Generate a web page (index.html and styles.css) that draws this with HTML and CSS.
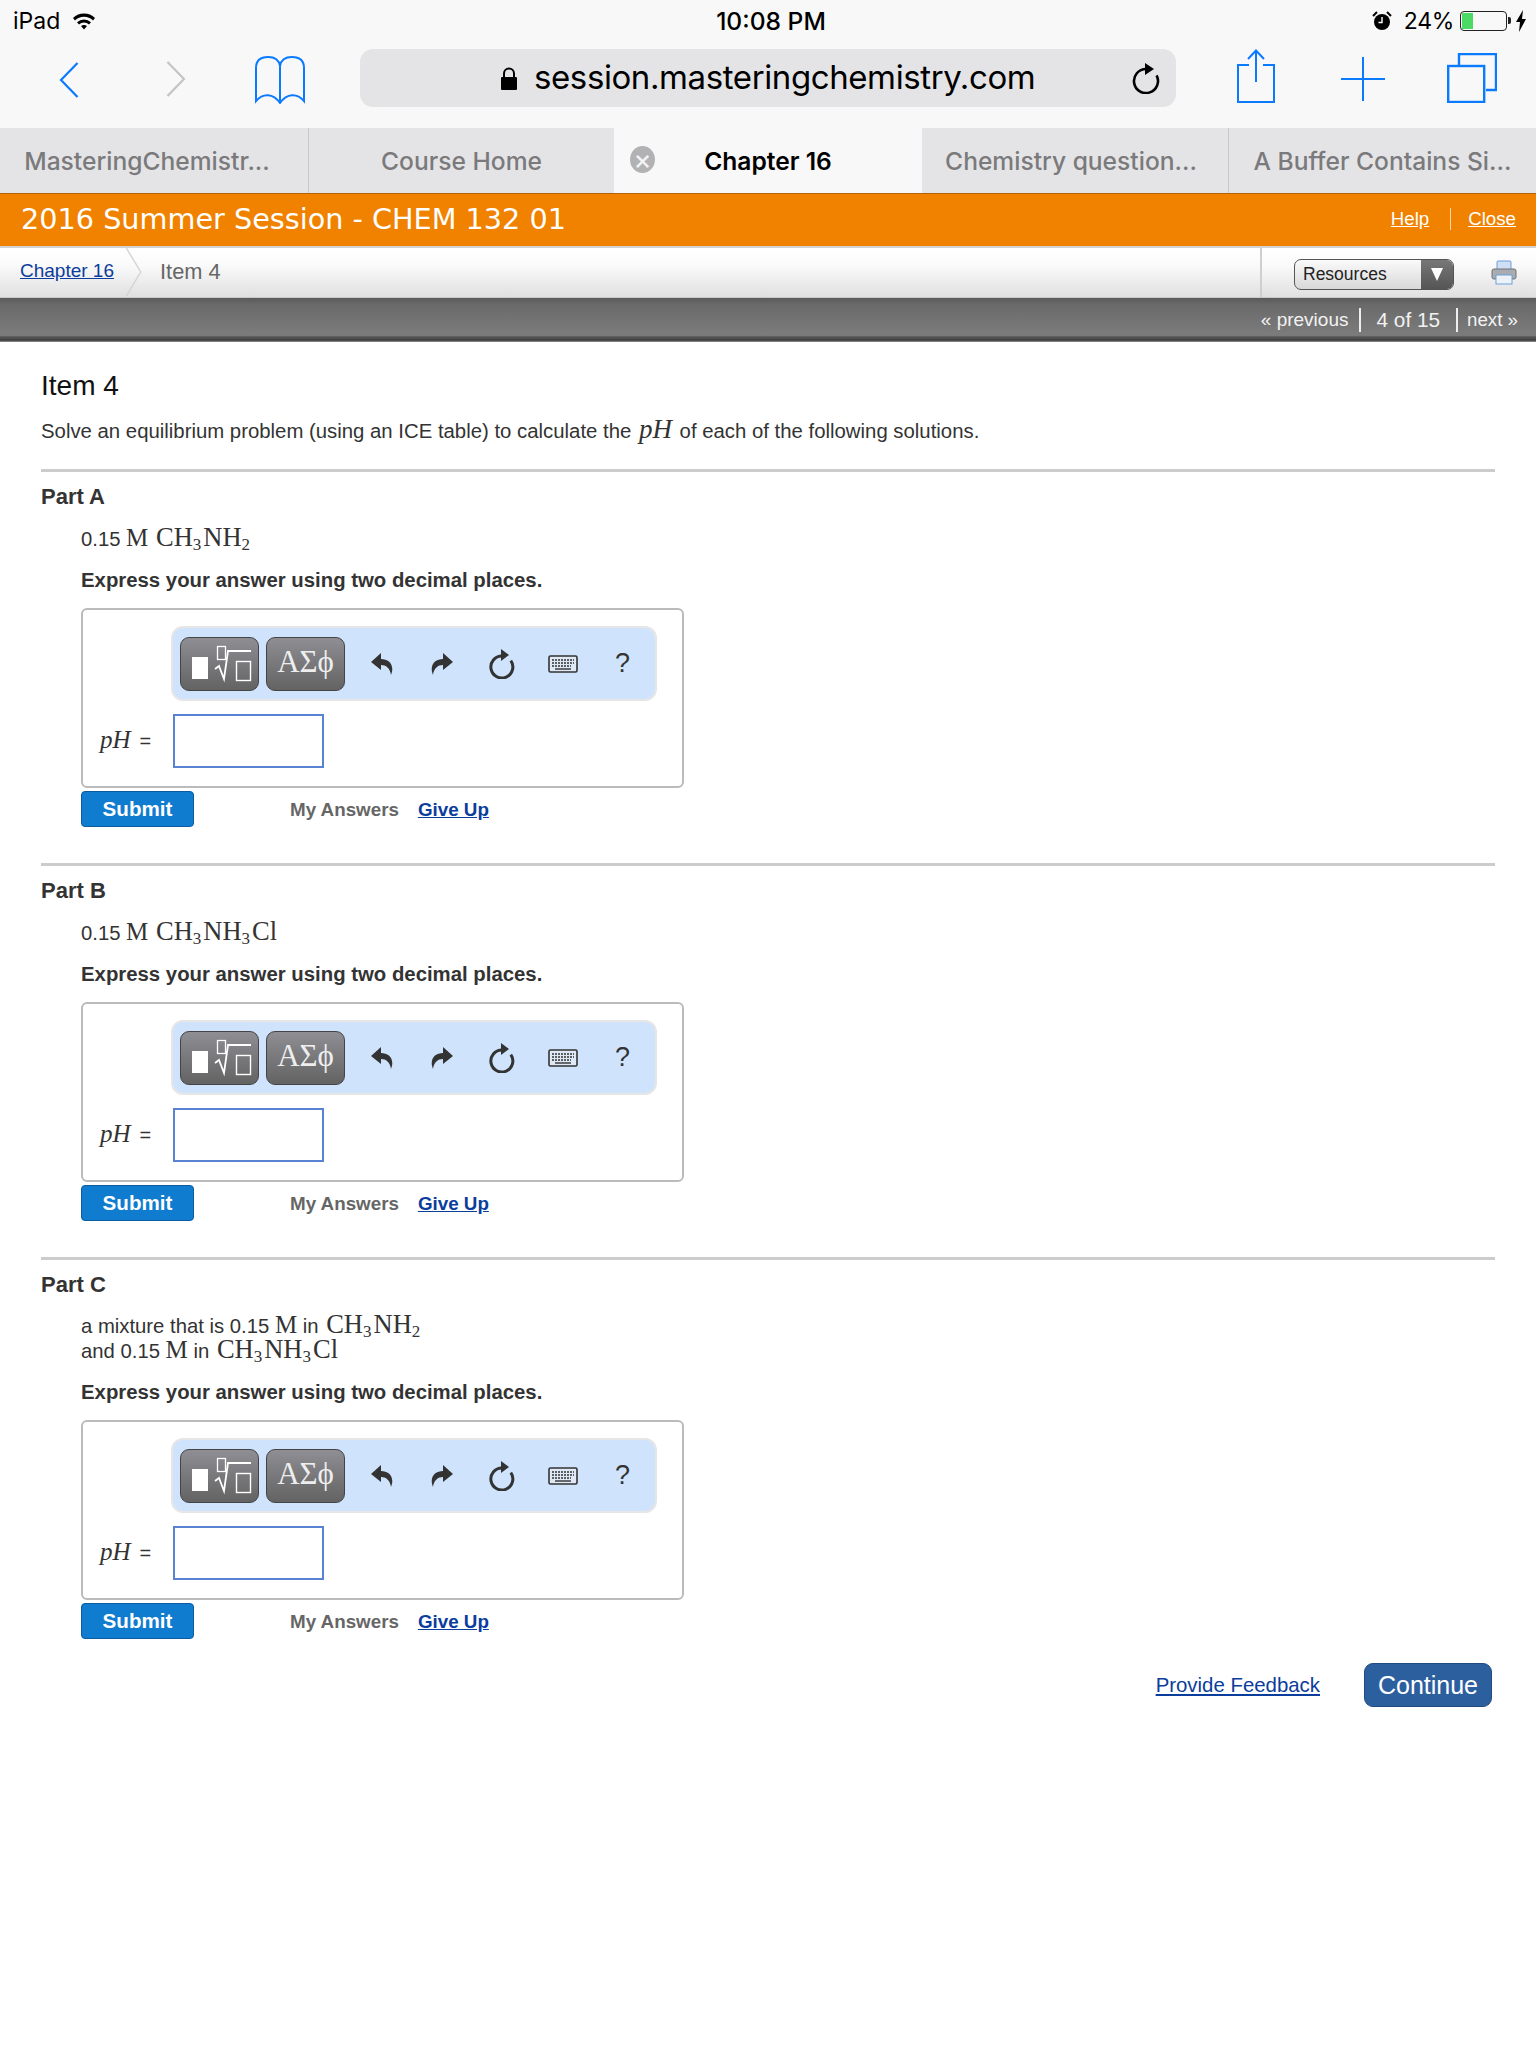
FILE: index.html
```html
<!DOCTYPE html>
<html lang="en">
<head>
<meta charset="utf-8">
<title>Item 4</title>
<link rel="stylesheet" href="styles.css">
</head>
<body>
<svg class="defs" width="0" height="0" aria-hidden="true">
  <symbol id="i-undo" viewBox="0 0 22 24"><path d="M10 1 L0 10 L10 18 V13 C15 13 19 16 20 23 C24 13 18 7 10 7 Z"/></symbol>
  <symbol id="i-redo" viewBox="0 0 22 24"><path d="M12 1 L22 10 L12 18 V13 C7 13 3 16 2 23 C-2 13 4 7 12 7 Z"/></symbol>
  <symbol id="i-reset" viewBox="0 0 28 30"><path d="M14 7 A11 11 0 1 0 22.8 11.6" fill="none" stroke="#333" stroke-width="3"/><path d="M13 0 L21 6 L13 12 Z"/></symbol>
  <symbol id="i-kbd" viewBox="0 0 30 18"><rect x="1" y="1" width="28" height="16" rx="1.5" fill="#dfe9f5" stroke="#333" stroke-width="1.6"/><path d="M4 5h22M4 8h22M4 11h19" stroke="#333" stroke-width="1.5" stroke-dasharray="2 1" fill="none"/><path d="M7 14h16" stroke="#333" stroke-width="1.4"/></symbol>
  <symbol id="i-tpl" viewBox="0 0 78 54"><rect x="12" y="20" width="16" height="22" fill="#fff"/><rect x="37.5" y="9.5" width="8" height="13" fill="none" stroke="#fff" stroke-width="1.3"/><path d="M35 32 L39 29 L44 42 L48 14 H71" fill="none" stroke="#fff" stroke-width="1.8"/><rect x="56.5" y="24.5" width="14" height="19" fill="none" stroke="#fff" stroke-width="1.4"/></symbol>
</svg>

<header class="ios-status">
  <div class="status-left">iPad
    <svg class="wifi" width="24" height="18" viewBox="0 0 24 18"><path d="M1 6 A16 16 0 0 1 23 6 L21 8.4 A13 13 0 0 0 3 8.4 Z M5 10.2 A10.5 10.5 0 0 1 19 10.2 L17 12.4 A7.5 7.5 0 0 0 7 12.4 Z M9 14 A5 5 0 0 1 15 14 L12 17.5 Z" fill="#000"/></svg>
  </div>
  <div class="status-time">10:08 PM</div>
  <div class="status-right">
    <svg width="20" height="20" viewBox="0 0 20 20"><circle cx="10" cy="11" r="8" fill="#000"/><path d="M10 6v5.5H6.5" stroke="#fff" stroke-width="1.4" fill="none"/><path d="M1 5 L5 1 M19 5 L15 1" stroke="#000" stroke-width="2"/></svg>
    <span class="pct">24%</span>
    <span class="battery"><span class="battery-fill"></span></span>
    <svg width="12" height="22" viewBox="0 0 12 22"><path d="M8 0 L1 12 H5 L4 22 L11 9 H7 Z" fill="#000"/></svg>
  </div>
</header>

<div class="safari-bar">
  <div class="nav-icons">
    <svg class="ic-back" width="20" height="36" viewBox="0 0 20 36"><path d="M18.5 1 L2 18 L18.5 35" fill="none" stroke="#0a7aff" stroke-width="2.2"/></svg>
    <svg class="ic-fwd" width="20" height="36" viewBox="0 0 20 36"><path d="M1.5 1 L18 18 L1.5 35" fill="none" stroke="#c4c4c6" stroke-width="2.2"/></svg>
    <svg class="ic-book" width="50" height="48" viewBox="0 0 50 48"><path d="M25 10 C24 4 20 1 13 1 C5 1 1 4 1 12 V45 C8 37 18 37 25 47 C32 37 42 37 49 45 V12 C49 4 45 1 37 1 C30 1 26 4 25 10 Z M25 10 V47" fill="none" stroke="#0a7aff" stroke-width="2"/></svg>
  </div>
  <div class="address">
    <svg class="lock" width="18" height="23" viewBox="0 0 18 23"><rect x="1" y="10" width="16" height="13" rx="1" fill="#000"/><path d="M4 10 V6.5 A5 5 0 0 1 14 6.5 V10" fill="none" stroke="#000" stroke-width="2"/></svg>
    <span class="url">session.masteringchemistry.com</span>
    <svg class="reload" width="28" height="32" viewBox="0 0 28 32"><path d="M14 7 A12 12 0 1 0 24.6 13.4" fill="none" stroke="#000" stroke-width="2.6"/><path d="M13 1 L22 7 L13 13 Z" fill="#000"/></svg>
  </div>
  <div class="action-icons">
    <svg class="ic-share" width="38" height="54" viewBox="0 0 38 54"><path d="M12 16 H1 V53 H37 V16 H26" fill="none" stroke="#0a7aff" stroke-width="2"/><path d="M19 2 V33 M11 10 L19 1.5 L27 10" fill="none" stroke="#0a7aff" stroke-width="2"/></svg>
    <svg class="ic-plus" width="44" height="44" viewBox="0 0 44 44"><path d="M22 0 V44 M0 22 H44" stroke="#0a7aff" stroke-width="2"/></svg>
    <svg class="ic-tabs" width="50" height="50" viewBox="0 0 50 50"><path d="M12 12 V1 H49 V37 H39" fill="none" stroke="#0a7aff" stroke-width="2.4"/><rect x="1.2" y="13" width="36" height="36" fill="none" stroke="#0a7aff" stroke-width="2.4"/></svg>
  </div>
</div>

<nav class="tabs">
  <div class="tab tab-first">MasteringChemistr...</div>
  <div class="tab">Course Home</div>
  <div class="tab tab-active">
    <span class="tab-close">×</span>
    <span>Chapter 16</span>
  </div>
  <div class="tab tab-fourth">Chemistry question...</div>
  <div class="tab tab-last">A Buffer Contains Si...</div>
</nav>

<div class="course-bar">
  <div class="course-title">2016 Summer Session - CHEM 132 01</div>
  <div class="course-links"><a href="#">Help</a><span class="course-sep"></span><a href="#">Close</a></div>
</div>

<div class="crumb-bar">
  <a class="crumb-link" href="#">Chapter 16</a>
  <svg class="crumb-arrow" width="18" height="50" viewBox="0 0 18 50"><path d="M1 0 L16 25 L1 50" fill="none" stroke="#d4d4d4" stroke-width="1.5"/></svg>
  <span class="crumb-current">Item 4</span>
  <div class="crumb-tools">
    <div class="select"><span class="select-label">Resources</span><span class="select-btn"><i class="select-tri"></i></span></div>
    <svg class="printer" width="26" height="25" viewBox="0 0 26 25"><rect x="6" y="1" width="14" height="13" rx="1" fill="#cfe0f5" stroke="#6f9fd8"/><rect x="1" y="9" width="24" height="10" rx="2" fill="#a9acb0" stroke="#6f7378"/><rect x="5" y="15" width="16" height="9" fill="#eef3fa" stroke="#6f9fd8"/></svg>
  </div>
</div>

<div class="pager-bar">
  <span>« previous</span><span class="pager-sep"></span><span class="pager-count">4 of 15</span><span class="pager-sep pager-sep-last"></span><span class="pager-next">next »</span>
</div>

<main class="content">
  <h1 class="item-title">Item 4</h1>
  <p class="intro">Solve an equilibrium problem (using an ICE table) to calculate the <span class="math math-i math-big">pH</span> of each of the following solutions.</p>

  <section class="part part-first">
    <h2 class="part-title">Part A</h2>
    <div class="part-body">
      <p class="formula">0.15 <span class="math">M</span> <span class="math chem">CH<sub>3</sub>NH<sub>2</sub></span></p>
      <p class="instruction">Express your answer using two decimal places.</p>
      <div class="answer-box">
        <div class="math-toolbar">
          <button class="tb-btn"><svg width="78" height="54"><use href="#i-tpl"/></svg></button>
          <button class="tb-btn tb-greek">ΑΣϕ</button>
          <svg class="tb-ic tb-undo" width="22" height="24"><use href="#i-undo"/></svg>
          <svg class="tb-ic tb-redo" width="22" height="24"><use href="#i-redo"/></svg>
          <svg class="tb-ic tb-reset" width="28" height="30"><use href="#i-reset"/></svg>
          <svg class="tb-ic tb-kbd" width="30" height="18"><use href="#i-kbd"/></svg>
          <span class="tb-help">?</span>
        </div>
        <div class="answer-row"><span class="answer-label"><span class="math math-i">pH</span><span class="eq">=</span></span><span class="answer-input"></span></div>
      </div>
      <div class="actions"><button class="submit">Submit</button><span class="my-answers">My Answers</span><a class="give-up" href="#">Give Up</a></div>
    </div>
  </section>

  <section class="part">
    <h2 class="part-title">Part B</h2>
    <div class="part-body">
      <p class="formula">0.15 <span class="math">M</span> <span class="math chem">CH<sub>3</sub>NH<sub>3</sub>Cl</span></p>
      <p class="instruction">Express your answer using two decimal places.</p>
      <div class="answer-box">
        <div class="math-toolbar">
          <button class="tb-btn"><svg width="78" height="54"><use href="#i-tpl"/></svg></button>
          <button class="tb-btn tb-greek">ΑΣϕ</button>
          <svg class="tb-ic tb-undo" width="22" height="24"><use href="#i-undo"/></svg>
          <svg class="tb-ic tb-redo" width="22" height="24"><use href="#i-redo"/></svg>
          <svg class="tb-ic tb-reset" width="28" height="30"><use href="#i-reset"/></svg>
          <svg class="tb-ic tb-kbd" width="30" height="18"><use href="#i-kbd"/></svg>
          <span class="tb-help">?</span>
        </div>
        <div class="answer-row"><span class="answer-label"><span class="math math-i">pH</span><span class="eq">=</span></span><span class="answer-input"></span></div>
      </div>
      <div class="actions"><button class="submit">Submit</button><span class="my-answers">My Answers</span><a class="give-up" href="#">Give Up</a></div>
    </div>
  </section>

  <section class="part part-last">
    <h2 class="part-title">Part C</h2>
    <div class="part-body">
      <p class="formula formula-two">a mixture that is 0.15 <span class="math">M</span> in <span class="math chem">CH<sub>3</sub>NH<sub>2</sub></span><br>and 0.15 <span class="math">M</span> in <span class="math chem">CH<sub>3</sub>NH<sub>3</sub>Cl</span></p>
      <p class="instruction">Express your answer using two decimal places.</p>
      <div class="answer-box">
        <div class="math-toolbar">
          <button class="tb-btn"><svg width="78" height="54"><use href="#i-tpl"/></svg></button>
          <button class="tb-btn tb-greek">ΑΣϕ</button>
          <svg class="tb-ic tb-undo" width="22" height="24"><use href="#i-undo"/></svg>
          <svg class="tb-ic tb-redo" width="22" height="24"><use href="#i-redo"/></svg>
          <svg class="tb-ic tb-reset" width="28" height="30"><use href="#i-reset"/></svg>
          <svg class="tb-ic tb-kbd" width="30" height="18"><use href="#i-kbd"/></svg>
          <span class="tb-help">?</span>
        </div>
        <div class="answer-row"><span class="answer-label"><span class="math math-i">pH</span><span class="eq">=</span></span><span class="answer-input"></span></div>
      </div>
      <div class="actions"><button class="submit">Submit</button><span class="my-answers">My Answers</span><a class="give-up" href="#">Give Up</a></div>
    </div>
  </section>

  <div class="page-footer">
    <a class="feedback" href="#">Provide Feedback</a>
    <button class="continue">Continue</button>
  </div>
</main>
</body>
</html>
```
FILE: styles.css
```css
* { box-sizing: border-box; }
html, body { margin: 0; padding: 0; background: #fff; }
body { font-family: "Liberation Sans", Arial, sans-serif; width: 1536px; height: 2048px; overflow: hidden; color: #333; }
.defs { position: absolute; }
p, h1, h2 { margin: 0; font-weight: normal; }
button { font-family: inherit; padding: 0; }

.ios-status { height: 41px; background: #f8f8f8; display: grid; grid-template-columns: 1fr auto 1fr; align-items: center; padding: 0 9px 0 13px; font-family: Inter, "Liberation Sans", sans-serif; font-size: 23px; color: #000; }
.status-left { display: flex; align-items: center; gap: 12px; }
.status-time { font-weight: 500; font-size: 24.6px; padding-left: 2px; }
.status-right { display: flex; align-items: center; justify-content: flex-end; gap: 6px; }
.pct { margin-left: 6px; letter-spacing: -0.3px; }
.battery { width: 47px; height: 20px; border: 1.5px solid #222; border-radius: 4px; padding: 1px; display: block; position: relative; margin-right: 2px; }
.battery::after { content: ""; position: absolute; right: -4.5px; top: 5px; width: 3px; height: 7px; background: #222; border-radius: 0 2px 2px 0; }
.battery-fill { display: block; width: 11px; height: 100%; background: #4cd964; }

.safari-bar { height: 87px; background: #f8f8f8; display: flex; align-items: flex-start; }
.nav-icons { width: 360px; display: flex; padding-left: 59px; }
.ic-back { margin-top: 21px; }
.ic-fwd { margin-top: 20px; margin-left: 87px; }
.ic-book { margin-top: 15px; margin-left: 69px; }
.address { width: 816px; height: 58px; margin-top: 8px; background: #e4e4e6; border-radius: 13px; display: flex; align-items: center; padding-left: 140px; font-family: Inter, "Liberation Sans", sans-serif; font-size: 33px; letter-spacing: -0.4px; color: #000; }
.lock { margin-right: 16px; }
.url { white-space: nowrap; padding-bottom: 2px; }
.reload { margin-left: auto; margin-right: 16px; }
.action-icons { display: flex; padding-left: 61px; }
.ic-share { margin-top: 8px; }
.ic-plus { margin-top: 16px; margin-left: 66px; }
.ic-tabs { margin-top: 12px; margin-left: 62px; }

.tabs { height: 65px; display: grid; grid-template-columns: 308px 306px 308px 306px 308px; background: #e4e4e6; font-family: Inter, "Liberation Sans", sans-serif; font-size: 24.6px; font-weight: 500; color: #7a7a7c; }
.tab { display: flex; align-items: center; justify-content: center; border-left: 1px solid #c8c8ca; white-space: nowrap; }
.tab-first { border-left: 0; padding-right: 14px; }
.tab-fourth { border-left: 0; padding-right: 8px; }
.tab-active { background: #f8f8f8; color: #000; font-weight: 600; border-left: 0; position: relative; }
.tab-close { position: absolute; left: 16px; top: 18px; width: 25px; height: 27px; border-radius: 50%; background: #b2b2b4; color: #f4f4f4; font-size: 28px; font-weight: 400; line-height: 26px; text-align: center; }

.course-bar { height: 53px; background: #f08200; border-top: 1px solid #b5620c; display: flex; align-items: center; justify-content: space-between; padding: 0 20px 3px 21px; color: #fff; }
.course-title { font-family: "DejaVu Sans", sans-serif; font-size: 28.7px; white-space: nowrap; }
.course-links { display: flex; align-items: center; font-size: 18.7px; }
.course-links a { color: #fff; }
.course-sep { width: 1px; height: 22px; background: #ffd9a8; margin: 0 17px 0 21px; }

.crumb-bar { height: 52px; border-top: 2px solid #d2d2d2; background: linear-gradient(#fff, #fafafa 35%, #e0e0e0); display: flex; align-items: center; padding-left: 20px; border-bottom: 1px solid #c9c9c9; font-size: 20px; }
.crumb-link { color: #0b3d9c; font-size: 19px; margin-bottom: 3px; }
.crumb-arrow { margin-left: 11px; align-self: flex-start; height: 48px; }
.crumb-current { margin-left: 17px; color: #666; font-size: 21.8px; margin-bottom: 1px; }
.crumb-tools { margin-left: auto; width: 276px; height: 100%; border-left: 2px solid #cfcfcf; display: flex; align-items: center; padding-left: 32px; }
.select { width: 160px; height: 31px; border: 1.5px solid #555; border-radius: 7px; display: flex; overflow: hidden; background: linear-gradient(#fafafa, #d8d8d8); margin-top: 4px; }
.select-label { flex: 1; padding-left: 8px; font-size: 17.5px; line-height: 28px; color: #222; }
.select-btn { width: 32px; background: linear-gradient(#777, #555); display: flex; align-items: center; justify-content: center; }
.select-tri { width: 0; height: 0; border-left: 6px solid transparent; border-right: 6px solid transparent; border-top: 13px solid #fff; }
.printer { margin-left: 37px; }

.pager-bar { height: 44px; background: linear-gradient(#5a5a5a, #6a6a6a 15%, #7c7c7c 85%, #5a5a5a 88%, #3e3e3e 96%, #999); display: flex; align-items: center; justify-content: flex-end; padding: 0 18px 1px 0; color: #f2f2f2; font-size: 19px; }
.pager-sep { width: 2px; height: 24px; background: #eee; margin: 0 13px 0 11px; }
.pager-sep-last { margin: 0 9px 0 12px; }
.pager-count { margin: 0 4px 0 2px; font-size: 20.8px; }
.pager-next { font-size: 18.7px; }

.content { padding: 0 41px; }
.item-title { font-size: 28px; line-height: 32px; color: #111; margin-top: 28px; }
.intro { font-size: 20.35px; line-height: 30px; margin-top: 12px; }
.math { font-family: "Liberation Serif", "DejaVu Serif", serif; font-size: 25px; }
.math-i { font-style: italic; }
.math-big { font-size: 27px; margin: 0 2px; }
.chem { font-size: 26.5px; margin-left: 2px; }
.math sub { font-size: 17px; line-height: 0; vertical-align: -4px; margin-right: 2px; }

.part { border-top: 3px solid #ccc; padding-top: 12px; height: 394px; }
.part-first { margin-top: 23px; }
.part-last { height: 406px; }
.part-title { font-size: 22px; font-weight: bold; line-height: 26px; color: #333; }
.part-body { padding-left: 40px; }
.formula { font-size: 20.3px; line-height: 32px; margin-top: 11px; }
.formula-two { line-height: 23px; margin-top: 15px; height: 54px; }
.instruction { font-size: 20.35px; font-weight: bold; line-height: 26px; margin-top: 12px; }
.answer-box { width: 603px; height: 180px; margin-top: 15px; border: 2px solid #bbb; border-radius: 6px; padding: 16px 0 0 88px; }
.math-toolbar { width: 486px; height: 75px; background: #cfe4fc; border: 2px solid #e6e6e6; border-radius: 12px; display: flex; align-items: center; padding-left: 7px; }
.tb-btn { width: 79px; height: 54px; border: 1.5px solid #444; border-radius: 9px; background: linear-gradient(#8e8e94, #636363); color: #eee; display: block; margin-right: 7px; }
.tb-btn svg { display: block; margin: -1px; fill: #fff; }
.tb-greek { font-family: "Liberation Serif", serif; font-size: 31px; line-height: 46px; padding-bottom: 4px; }
.tb-ic { fill: #333; display: block; }
.tb-undo { margin-left: 19px; }
.tb-redo { margin-left: 38px; }
.tb-reset { margin-left: 35px; }
.tb-kbd { margin-left: 32px; }
.tb-help { margin-left: 37px; font-size: 27px; color: #333; }
.answer-row { display: flex; align-items: center; margin: 13px 0 0 -71px; }
.answer-label { width: 73px; font-size: 20px; white-space: nowrap; display: flex; align-items: baseline; margin-bottom: 2px; }
.eq { margin-left: 9px; font-size: 20px; }
.answer-input { width: 151px; height: 54px; border: 2px solid #5a82d2; background: #fff; display: block; }
.actions { display: flex; align-items: center; height: 36px; margin-top: 3px; font-size: 18.8px; font-weight: bold; }
.submit { width: 113px; height: 36px; background: #0f7ccf; border: 1.5px solid #0b5c9e; border-radius: 4px; color: #fff; font-size: 20.6px; font-weight: bold; }
.my-answers { margin-left: 96px; color: #666; margin-top: 1px; }
.give-up { margin-left: 19px; color: #0b3d9c; margin-top: 1px; }

.page-footer { display: flex; align-items: center; justify-content: flex-end; padding-right: 3px; }
.feedback { color: #0b3d9c; font-size: 20.4px; }
.continue { width: 128px; height: 44px; margin-left: 44px; background: #2c5f9e; border: 1.5px solid #1f4a80; border-radius: 9px; color: #fff; font-size: 25px; }
```
